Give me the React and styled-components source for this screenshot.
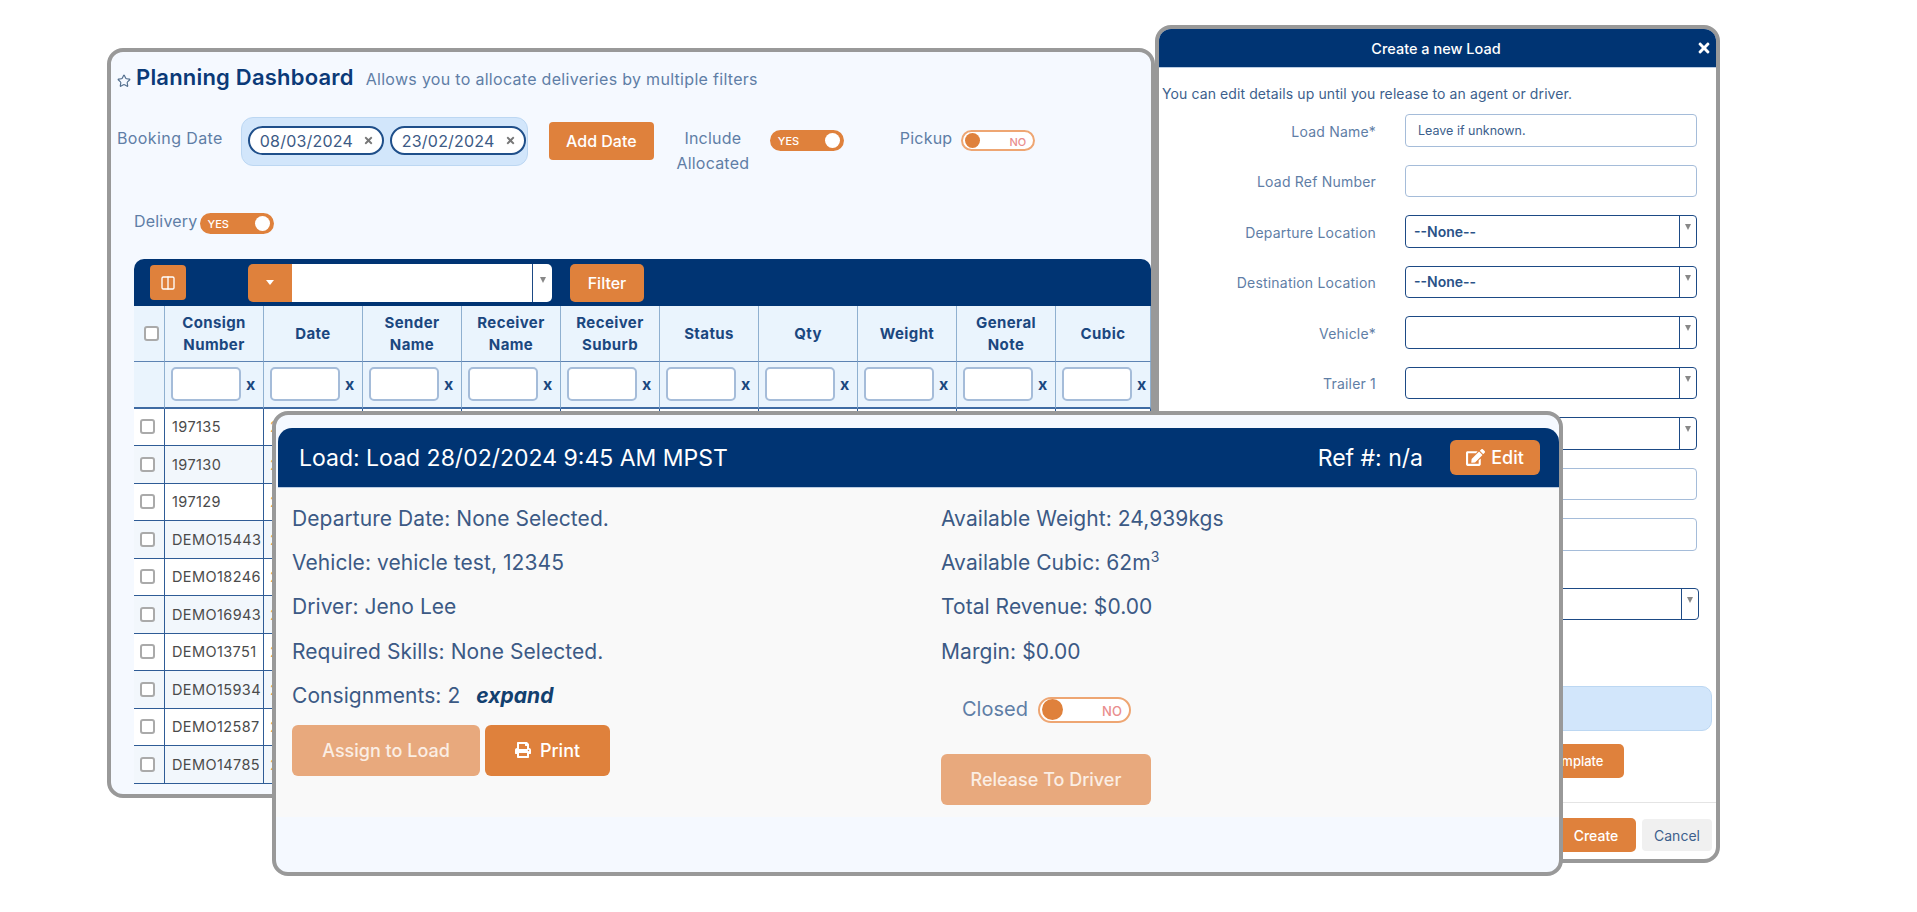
import styled, { createGlobalStyle } from "styled-components";
import { Columns2, Star } from "lucide-react";
import { FaEdit, FaPrint, FaTimes } from "react-icons/fa";

const navy = "#003473";
const orange = "#df813c";
const faded = "#e8a97d";
const labelBlue = "#5f7ea6";

const GlobalStyle = createGlobalStyle`
  * { box-sizing: border-box; }
  body { margin: 0; background: #fff; font-family: Inter, "Liberation Sans", sans-serif; }
`;

const Desktop = styled.div`
  position: relative;
  width: 1917px;
  height: 912px;
  overflow: hidden;
  background: #fff;
`;

const Frame = styled.section`
  position: absolute;
  left: ${(p) => p.$left}px;
  top: ${(p) => p.$top}px;
  width: ${(p) => p.$width}px;
  height: ${(p) => p.$height}px;
  border: 4px solid #999;
  border-radius: 16px;
  overflow: hidden;
  background: ${(p) => p.$bg};
`;

/* planning window */
const TitleRow = styled.div`
  display: flex;
  align-items: baseline;
  padding: 11px 0 0 6px;
  height: 65px;
`;
const StarIcon = styled(Star)`
  align-self: flex-start;
  margin: 11px 5px 0 0;
  color: #54708f;
`;
const Title = styled.h1`
  margin: 0;
  font-size: 22px;
  line-height: 28px;
  font-weight: 600;
  color: #0b3a78;
  letter-spacing: 0.2px;
`;
const Subtitle = styled.span`
  margin-left: 12px;
  font-size: 16px;
  color: ${labelBlue};
  letter-spacing: 0.3px;
`;
const FilterRow = styled.div`
  display: flex;
  align-items: flex-start;
  height: 96px;
  padding-left: 6px;
`;
const FieldLabel = styled.span`
  font-size: 16px;
  line-height: 24px;
  color: ${labelBlue};
  letter-spacing: ${(p) => p.$spacing || 0.2}px;
  margin: ${(p) => p.$margin || "0"};
`;
const PillBox = styled.div`
  display: flex;
  flex: none;
  gap: 6px;
  width: 287px;
  height: 49px;
  margin: 0 21px 0 18px;
  padding: 8px 0 0 6px;
  background: #d2e6fb;
  border: 1px solid #bcd7f2;
  border-radius: 12px;
`;
const Pill = styled.span`
  display: flex;
  align-items: center;
  justify-content: space-between;
  width: 136px;
  height: 29px;
  padding: 0 8px 0 10px;
  background: #fff;
  border: 2px solid #1f4f8a;
  border-radius: 15px;
  font-size: 16px;
  color: #3c5a85;
  letter-spacing: 0.2px;
  svg {
    color: #777;
    width: 11px;
    height: 11px;
  }
`;
const OrangeButton = styled.button`
  display: inline-flex;
  flex: none;
  align-items: center;
  justify-content: center;
  gap: ${(p) => p.$gap || 0}px;
  width: ${(p) => p.$width}px;
  height: ${(p) => p.$height}px;
  padding: 0;
  border: 0;
  border-radius: ${(p) => p.$radius || 5}px;
  background: ${(p) => (p.$faded ? faded : orange)};
  color: ${(p) => (p.$faded ? "#fbeee4" : "#fff")};
  font-family: inherit;
  font-size: ${(p) => p.$size || 16}px;
  font-weight: 500;
`;
const AddDate = styled(OrangeButton)`
  margin-top: 5px;
`;
const ToggleTrack = styled.span`
  display: inline-flex;
  align-items: center;
  justify-content: space-between;
  flex: none;
  width: ${(p) => p.$width || 74}px;
  height: ${(p) => p.$height || 21}px;
  padding: 0 2px 0 ${(p) => (p.$on ? 6 : 2)}px;
  margin: ${(p) => p.$margin || "0"};
  border-radius: 14px;
  border: 2px solid ${(p) => (p.$on ? orange : "#eea673")};
  background: ${(p) => (p.$on ? orange : "#fff")};
  font-size: ${(p) => p.$font || 11}px;
  font-weight: 500;
  color: ${(p) => (p.$on ? "#fff" : "#e98d8d")};
`;
const ToggleKnob = styled.i`
  display: block;
  flex: none;
  width: ${(p) => p.$size || 15}px;
  height: ${(p) => p.$size || 15}px;
  border-radius: 50%;
  background: ${(p) => (p.$on ? "#fff" : orange)};
`;
const ToggleNo = styled.span`
  margin-right: 5px;
  margin-top: 2px;
`;
const Toggle = ({ on, ...rest }) => (
  <ToggleTrack $on={on} {...rest}>
    {on ? <span>YES</span> : <ToggleKnob $size={rest.$knob} />}
    {on ? <ToggleKnob $on /> : <ToggleNo>NO</ToggleNo>}
  </ToggleTrack>
);
const DeliveryRow = styled.div`
  display: flex;
  align-items: flex-start;
  height: 46px;
  padding-left: 23px;
`;
const IncludeLabel = styled(FieldLabel)`
  flex: none;
  margin: 9px 16px 0 18px;
  width: 82px;
  line-height: 25px;
  text-align: center;
`;
const TableWrap = styled.div`
  margin-left: 23px;
`;
const Toolbar = styled.div`
  display: flex;
  align-items: center;
  height: 47px;
  padding-left: 16px;
  background: ${navy};
  border-radius: 10px 10px 0 0;
`;
const CaretButton = styled(OrangeButton)`
  margin-left: 62px;
  border-radius: 5px 0 0 5px;
`;
const Caret = styled.i`
  width: 0;
  height: 0;
  border-left: 4px solid transparent;
  border-right: 4px solid transparent;
  border-top: 5px solid #fff;
`;
const ToolbarSelect = styled.div`
  display: flex;
  justify-content: flex-end;
  width: 260px;
  height: 38px;
  margin-right: 18px;
  background: #fff;
  border-radius: 0 5px 5px 0;
`;
const SelectArrowBox = styled.span`
  display: flex;
  justify-content: center;
  flex: none;
  width: ${(p) => p.$width || 20}px;
  height: 100%;
  padding-top: ${(p) => p.$top || 13}px;
  border-left: 1px solid #1d4a85;
`;
const SelectArrow = styled.i`
  width: 0;
  height: 0;
  border-left: 3.5px solid transparent;
  border-right: 3.5px solid transparent;
  border-top: 6px solid #888;
`;
const Grid = styled.div`
  display: grid;
  grid-template-columns: 31px repeat(9, 99px) 95px;
  grid-template-rows: 55.5px 47px;
  grid-auto-rows: 37.5px;
`;
const HeadCell = styled.div`
  display: flex;
  align-items: center;
  justify-content: center;
  padding: ${(p) => (p.$box ? "0 0 0 4px" : "2px 2px 0")};
  background: #eaf4fd;
  border-right: 1px solid #8fb0d0;
  border-bottom: 1px solid #5d83b3;
  font-size: 15px;
  line-height: 22px;
  font-weight: 700;
  color: #1b477f;
  letter-spacing: 0.4px;
  text-align: center;
`;
const SearchCell = styled(HeadCell)`
  justify-content: flex-start;
  gap: 5px;
  padding: 0 0 0 6px;
  border-bottom: 2px solid #3f6ba3;
  font-size: 16px;
`;
const SearchInput = styled.span`
  display: block;
  flex: none;
  width: 70px;
  height: 34px;
  background: #fff;
  border: 2px solid #a5bcd9;
  border-radius: 5px;
`;
const BodyCell = styled.div`
  display: flex;
  align-items: center;
  padding-left: ${(p) => p.$pad || 7}px;
  overflow: hidden;
  white-space: nowrap;
  background: ${(p) => (p.$even ? "#f2f7fc" : "#fff")};
  border-right: 1px solid #2f5c96;
  border-bottom: 1px solid #2f5c96;
  font-size: 14.5px;
  color: ${(p) => p.$color || "#4b4b4b"};
  letter-spacing: 0.4px;
`;
const Check = styled.span`
  display: block;
  width: 15px;
  height: 15px;
  background: #fff;
  border: 2px solid #aaa;
  border-radius: 3px;
`;

/* create-load window */
const ModalHead = styled.header`
  position: relative;
  display: flex;
  align-items: center;
  justify-content: center;
  height: 39px;
  padding-right: 3px;
  background: ${navy};
  color: #fff;
  font-size: 14.5px;
  font-weight: 500;
  border-bottom: 1px solid #b9cbe2;
`;
const ModalClose = styled(FaTimes)`
  position: absolute;
  right: 4px;
  top: 11px;
  width: 16px;
  height: 16px;
`;
const ModalNote = styled.p`
  margin: 0;
  padding: 17px 0 11px 3px;
  font-size: 14px;
  line-height: 18px;
  color: #3d5f8c;
  letter-spacing: 0.1px;
`;
const FormRows = styled.div`
  display: grid;
  grid-template-columns: 217px 292px;
  column-gap: 29px;
  row-gap: 18px;
  align-items: center;
`;
const FormLabel = styled.label`
  padding-top: 2px;
  font-size: 14px;
  color: ${labelBlue};
  text-align: right;
  letter-spacing: 0.2px;
`;
const TextInput = styled.div`
  display: flex;
  align-items: center;
  height: 32.5px;
  padding-left: 12px;
  background: #fff;
  border: 1.5px solid #a5bcd9;
  border-radius: 4px;
  font-size: 12.5px;
  color: #3d5f8c;
`;
const SelectBox = styled.div`
  display: flex;
  align-items: center;
  justify-content: space-between;
  height: 32.5px;
  padding-left: 8px;
  background: #fff;
  border: 1.5px solid #1d4a85;
  border-radius: 4px;
  font-size: 14px;
  font-weight: 600;
  color: #2a5288;
`;
const LastSelect = styled(SelectBox)`
  width: 294px;
  margin-top: 19px;
`;
const InfoPanel = styled.div`
  height: 45px;
  margin: 66px 4px 0 6px;
  background: #d2e6fb;
  border: 1px solid #bcd7f2;
  border-radius: 10px;
`;
const TemplateRow = styled.div`
  display: flex;
  justify-content: flex-end;
  height: 72px;
  padding: 13px 92px 0 0;
  border-bottom: 1px solid #e4e4e4;
`;
const ModalFoot = styled.footer`
  display: flex;
  justify-content: flex-end;
  align-items: center;
  gap: 6px;
  padding: 15px 4px 0 0;
`;
const CancelButton = styled.button`
  width: 70px;
  height: 32px;
  border: 0;
  border-radius: 4px;
  background: #f0f0f0;
  color: #3d5f8c;
  font-family: inherit;
  font-size: 14px;
`;

/* load window */
const LoadHead = styled.header`
  display: flex;
  align-items: center;
  justify-content: space-between;
  height: 60px;
  margin: 13px 0 0 2px;
  padding: 0 19px 0 21px;
  background: ${navy};
  border-radius: 14px 14px 0 0;
  border-bottom: 1px solid #b9cbe2;
  color: #fff;
  font-size: 23px;
`;
const HeadRight = styled.div`
  display: flex;
  align-items: center;
  gap: 27px;
`;
const LoadBody = styled.div`
  display: grid;
  grid-template-columns: 665px 1fr;
  height: 329px;
  padding-top: 16px;
  background: #f9f9f9;
`;
const LoadColumn = styled.div`
  padding-left: ${(p) => p.$pad || 0}px;
`;
const InfoLine = styled.p`
  margin: 0 0 14.2px;
  font-size: 21px;
  line-height: 30px;
  color: #3c5a85;
  letter-spacing: 0.06px;
  sup {
    font-size: 14px;
    line-height: 0;
  }
`;
const ExpandLink = styled.b`
  margin-left: 10px;
  font-style: italic;
  color: #12406f;
`;
const ButtonRow = styled.div`
  display: flex;
  gap: 5px;
`;
const ClosedRow = styled.div`
  display: flex;
  align-items: flex-start;
  gap: 10px;
  height: 57px;
  margin-top: 30px;
  padding-left: 21px;
`;
const ClosedLabel = styled.span`
  font-size: 20px;
  line-height: 24px;
  color: ${labelBlue};
`;

const columns = [
  "Consign Number",
  "Date",
  "Sender Name",
  "Receiver Name",
  "Receiver Suburb",
  "Status",
  "Qty",
  "Weight",
  "General Note",
  "Cubic",
];
const consignments = [
  "197135",
  "197130",
  "197129",
  "DEMO15443",
  "DEMO18246",
  "DEMO16943",
  "DEMO13751",
  "DEMO15934",
  "DEMO12587",
  "DEMO14785",
];
const formFields = [
  { label: "Load Name*", kind: "text", value: "Leave if unknown." },
  { label: "Load Ref Number", kind: "text" },
  { label: "Departure Location", kind: "select", value: "--None--" },
  { label: "Destination Location", kind: "select", value: "--None--" },
  { label: "Vehicle*", kind: "select" },
  { label: "Trailer 1", kind: "select" },
  { label: "", kind: "select" },
  { label: "", kind: "text" },
  { label: "", kind: "text" },
];

const Select = ({ value, as }) => {
  const Box = as || SelectBox;
  return (
    <Box>
      <span>{value}</span>
      <SelectArrowBox $width={17} $top={8}>
        <SelectArrow />
      </SelectArrowBox>
    </Box>
  );
};

const PlanningWindow = () => (
  <Frame $left={107} $top={48} $width={1048} $height={750} $bg="#f5f9ff">
    <TitleRow>
      <StarIcon size={14} />
      <Title>Planning Dashboard</Title>
      <Subtitle>Allows you to allocate deliveries by multiple filters</Subtitle>
    </TitleRow>
    <FilterRow>
      <FieldLabel $margin="9px 0 0" $spacing={0.4}>
        Booking Date
      </FieldLabel>
      <PillBox>
        <Pill>
          08/03/2024 <FaTimes />
        </Pill>
        <Pill>
          23/02/2024 <FaTimes />
        </Pill>
      </PillBox>
      <AddDate $width={105} $height={38} $radius={4}>
        Add Date
      </AddDate>
      <IncludeLabel>
        Include
        <br />
        Allocated
      </IncludeLabel>
      <Toggle on $margin="13px 0 0" />
      <FieldLabel $margin="9px 9px 0 56px">Pickup</FieldLabel>
      <Toggle $margin="13px 0 0" />
    </FilterRow>
    <DeliveryRow>
      <FieldLabel $margin="-4px 2px 0 0">Delivery</FieldLabel>
      <Toggle on />
    </DeliveryRow>
    <TableWrap>
      <Toolbar>
        <OrangeButton $width={36} $height={35} $radius={4}>
          <Columns2 size={16} />
        </OrangeButton>
        <CaretButton $width={44} $height={38}>
          <Caret />
        </CaretButton>
        <ToolbarSelect>
          <SelectArrowBox>
            <SelectArrow />
          </SelectArrowBox>
        </ToolbarSelect>
        <OrangeButton $width={74} $height={38}>
          Filter
        </OrangeButton>
      </Toolbar>
      <Grid>
        <HeadCell $box>
          <Check />
        </HeadCell>
        {columns.map((name) => (
          <HeadCell key={name}>{name}</HeadCell>
        ))}
        <SearchCell />
        {columns.map((name) => (
          <SearchCell key={name}>
            <SearchInput />x
          </SearchCell>
        ))}
        {consignments.map((id, row) => (
          <>
            <BodyCell key={`${id}-check`} $even={row % 2 === 1} $pad={6}>
              <Check />
            </BodyCell>
            <BodyCell key={id} $even={row % 2 === 1}>
              {id}
            </BodyCell>
            {columns.slice(1).map((name, col) => (
              <BodyCell key={`${id}-${name}`} $even={row % 2 === 1} $pad={6} $color="#e59a4f">
                {col === 0 ? "2" : ""}
              </BodyCell>
            ))}
          </>
        ))}
      </Grid>
    </TableWrap>
  </Frame>
);

const CreateWindow = () => (
  <Frame $left={1155} $top={25} $width={565} $height={838} $bg="#fff">
    <ModalHead>
      Create a new Load
      <ModalClose />
    </ModalHead>
    <ModalNote>You can edit details up until you release to an agent or driver.</ModalNote>
    <FormRows>
      {formFields.map((field, i) => (
        <>
          <FormLabel key={`label-${i}`}>{field.label}</FormLabel>
          {field.kind === "text" ? (
            <TextInput key={`field-${i}`}>{field.value}</TextInput>
          ) : (
            <Select key={`field-${i}`} value={field.value} />
          )}
        </>
      ))}
      <span />
      <Select as={LastSelect} />
    </FormRows>
    <InfoPanel />
    <TemplateRow>
      <OrangeButton $width={150} $height={34} $size={13}>
        Save as Template
      </OrangeButton>
    </TemplateRow>
    <ModalFoot>
      <OrangeButton $width={80} $height={34} $size={14}>
        Create
      </OrangeButton>
      <CancelButton>Cancel</CancelButton>
    </ModalFoot>
  </Frame>
);

const LoadWindow = () => (
  <Frame $left={272} $top={411} $width={1291} $height={465} $bg="#f5f9ff">
    <LoadHead>
      <span>Load: Load 28/02/2024 9:45 AM MPST</span>
      <HeadRight>
        <span>Ref #: n/a</span>
        <OrangeButton $width={90} $height={35} $size={18} $gap={6} $radius={6}>
          <FaEdit size={19} /> Edit
        </OrangeButton>
      </HeadRight>
    </LoadHead>
    <LoadBody>
      <LoadColumn $pad={16}>
        <InfoLine>Departure Date: None Selected.</InfoLine>
        <InfoLine>Vehicle: vehicle test, 12345</InfoLine>
        <InfoLine>Driver: Jeno Lee</InfoLine>
        <InfoLine>Required Skills: None Selected.</InfoLine>
        <InfoLine>
          Consignments: 2 <ExpandLink>expand</ExpandLink>
        </InfoLine>
        <ButtonRow>
          <OrangeButton $faded $width={188} $height={51} $size={18} $radius={6}>
            Assign to Load
          </OrangeButton>
          <OrangeButton $width={125} $height={51} $size={18} $gap={9} $radius={6}>
            <FaPrint size={16} /> Print
          </OrangeButton>
        </ButtonRow>
      </LoadColumn>
      <LoadColumn>
        <InfoLine>Available Weight: 24,939kgs</InfoLine>
        <InfoLine>
          Available Cubic: 62m<sup>3</sup>
        </InfoLine>
        <InfoLine>Total Revenue: $0.00</InfoLine>
        <InfoLine>Margin: $0.00</InfoLine>
        <ClosedRow>
          <ClosedLabel>Closed</ClosedLabel>
          <Toggle $width={93} $height={26} $font={13} $knob={21} />
        </ClosedRow>
        <OrangeButton $faded $width={210} $height={51} $size={18} $radius={6}>
          Release To Driver
        </OrangeButton>
      </LoadColumn>
    </LoadBody>
  </Frame>
);

const App = () => (
  <Desktop>
    <GlobalStyle />
    <PlanningWindow />
    <CreateWindow />
    <LoadWindow />
  </Desktop>
);

export default App;
